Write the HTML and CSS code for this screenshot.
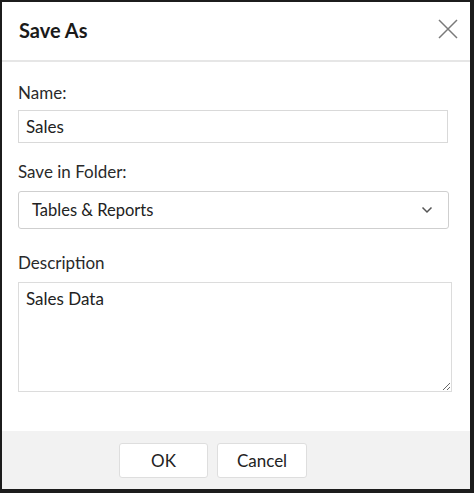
FILE: index.html
```html
<!DOCTYPE html>
<html lang="en">
<head>
<meta charset="utf-8">
<title>Save As</title>
<link rel="stylesheet" href="styles.css">
</head>
<body>
<div class="dialog">
  <div class="dialog-header">
    <h1 class="dialog-title">Save As</h1>
    <button class="close-btn" type="button" aria-label="Close">
      <svg width="20" height="20" viewBox="0 0 20 20"><path d="M1 1 L19 19 M19 1 L1 19" stroke="#7a7a7a" stroke-width="1.5" fill="none"/></svg>
    </button>
  </div>
  <div class="dialog-body">
    <label class="field-label name-label">Name:</label>
    <input class="text-input" type="text" value="Sales">
    <label class="field-label folder-label">Save in Folder:</label>
    <div class="select-box">
      <span class="select-value">Tables &amp; Reports</span>
      <svg class="chevron" width="12" height="8" viewBox="0 0 12 8"><path d="M1.5 1.5 L6 6 L10.5 1.5" stroke="#555" stroke-width="1.5" fill="none"/></svg>
    </div>
    <label class="field-label desc-label">Description</label>
    <textarea class="text-area">Sales Data</textarea>
  </div>
  <div class="dialog-footer">
    <button class="btn" type="button">OK</button>
    <button class="btn" type="button">Cancel</button>
  </div>
</div>
</body>
</html>
```
FILE: styles.css
```css
* { box-sizing: border-box; }
html, body { margin: 0; padding: 0; background: #1c1c1c; }
body { font-family: Lato, "Liberation Sans", sans-serif; color: #222; }

.dialog {
  width: 474px;
  height: 493px;
  background: #fff;
  border-style: solid;
  border-color: #1c1c1c;
  border-width: 2px 4px 4px 2px;
  display: flex;
  flex-direction: column;
}

.dialog-header {
  height: 60px;
  border-bottom: 2px solid #e6e6e6;
  display: flex;
  align-items: center;
  justify-content: space-between;
  padding: 0 12px 3px 17px;
}
.dialog-title {
  margin: 0;
  font-size: 20px;
  font-weight: 700;
  color: #1a1a1a;
}
.close-btn {
  border: 0;
  background: none;
  padding: 0;
  width: 20px;
  height: 20px;
  display: block;
  margin-top: -1px;
}
.close-btn svg { display: block; }

.dialog-body {
  flex: 1;
  padding: 21px 0 0 16px;
  display: flex;
  flex-direction: column;
  align-items: flex-start;
}
.field-label {
  font-size: 17px;
  line-height: 20px;
  color: #2a2a2a;
}
.name-label { margin-bottom: 7px; }
.folder-label { margin-top: 19px; margin-bottom: 9px; }
.desc-label { margin-top: 24px; margin-bottom: 9px; }

.text-input {
  width: 430px;
  height: 33px;
  border: 1px solid #d9d9d9;
  font-family: inherit;
  font-size: 17px;
  color: #222;
  padding: 0 7px;
  outline: none;
}

.select-box {
  width: 431px;
  height: 38px;
  border: 1px solid #cfcfcf;
  border-radius: 3px;
  display: flex;
  align-items: center;
  justify-content: space-between;
  padding: 0 15px 0 13px;
}
.select-value { font-size: 16.5px; color: #222; }
.chevron { display: block; }

.text-area {
  width: 434px;
  height: 110px;
  border: 1px solid #dcdcdc;
  font-family: inherit;
  font-size: 17px;
  color: #222;
  padding: 5px 7px;
  resize: both;
  outline: none;
}

.dialog-footer {
  height: 58px;
  background: #f2f2f2;
  display: flex;
  align-items: center;
  gap: 9px;
  padding-left: 117px;
}
.btn {
  width: 89px;
  height: 35px;
  background: #fff;
  border: 1px solid #dedede;
  border-radius: 3px;
  font-family: inherit;
  font-size: 17px;
  color: #222;
}
.btn + .btn { width: 90px; }
```
